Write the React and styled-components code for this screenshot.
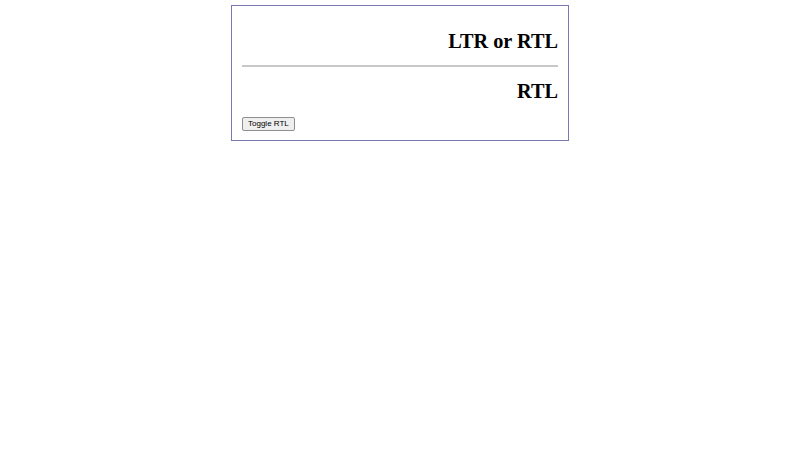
import { useState } from 'react';
import styled, { createGlobalStyle } from 'styled-components';

const GlobalStyle = createGlobalStyle`
    html, body {
        margin: 0;
        padding: 0;
        background: #ffffff;
    }
`

const App = () => {
    const [rtl, setRtl] = useState(true);

    return (
        <>
            <GlobalStyle />
            <Card>
                <Title $rtl={rtl}>LTR or RTL</Title>
                <Divider />
                <Title $rtl={rtl} $second>{rtl ? 'RTL' : 'LTR'}</Title>
                <ToggleButton onClick={() => setRtl(!rtl)}>
                    Toggle RTL
                </ToggleButton>
            </Card>
        </>
    )
}

const Card = styled.div`
    box-sizing: border-box;
    width: 338px;
    margin: 5px auto 0;
    padding: 0 10px 9.5px;
    border: 1px solid #7a78b0;
    display: flex;
    flex-direction: column;
    align-items: flex-start;
`

const Title = styled.h1`
    align-self: stretch;
    margin: ${props => props.$second ? '12.6px 0 14.6px' : '23.6px 0 12.4px'};
    font-family: "Liberation Serif", "Times New Roman", serif;
    font-size: 20.3px;
    font-weight: bold;
    line-height: 23px;
    color: #000000;
    text-align: ${props => props.$rtl ? 'right' : 'left'};
`

const Divider = styled.hr`
    align-self: stretch;
    margin: 0;
    height: 2px;
    border: none;
    background: #c8c8c8;
`

const ToggleButton = styled.button`
    margin: 0;
    padding: 1px 5px;
    font-family: "Liberation Sans", Arial, sans-serif;
    font-size: 8px;
    line-height: 9.5px;
    color: #000000;
    background: #efefef;
    border: 1px solid #8f8f8f;
    border-radius: 2px;
    cursor: pointer;
`

export default App;
